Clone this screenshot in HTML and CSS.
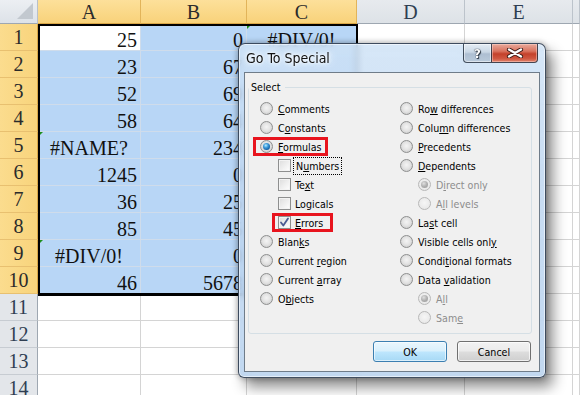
FILE: index.html
```html
<!DOCTYPE html>
<html>
<head>
<meta charset="utf-8">
<link rel="stylesheet" href="styles.css">
</head>
<body>
<div class="app">
  <div class="sheet">
    <div class="corner"><i class="corner-tri"></i></div>
    <div class="ch sel">A</div>
    <div class="ch sel">B</div>
    <div class="ch sel">C</div>
    <div class="ch">D</div>
    <div class="ch">E</div>
    <div class="ch"></div>

    <div class="rh sel">1</div>
    <div class="c act num">25</div>
    <div class="c s num">0</div>
    <div class="c s err"><i class="tri"></i>#DIV/0!</div>
    <div class="c"></div><div class="c"></div><div class="c"></div>

    <div class="rh sel">2</div>
    <div class="c s num">23</div>
    <div class="c s num">67</div>
    <div class="c s"></div>
    <div class="c"></div><div class="c"></div><div class="c"></div>

    <div class="rh sel">3</div>
    <div class="c s num">52</div>
    <div class="c s num">69</div>
    <div class="c s"></div>
    <div class="c"></div><div class="c"></div><div class="c"></div>

    <div class="rh sel">4</div>
    <div class="c s num">58</div>
    <div class="c s num">64</div>
    <div class="c s"></div>
    <div class="c"></div><div class="c"></div><div class="c"></div>

    <div class="rh sel">5</div>
    <div class="c s err"><i class="tri"></i>#NAME?</div>
    <div class="c s num">234</div>
    <div class="c s"></div>
    <div class="c"></div><div class="c"></div><div class="c"></div>

    <div class="rh sel">6</div>
    <div class="c s num">1245</div>
    <div class="c s num">0</div>
    <div class="c s"></div>
    <div class="c"></div><div class="c"></div><div class="c"></div>

    <div class="rh sel">7</div>
    <div class="c s num">36</div>
    <div class="c s num">25</div>
    <div class="c s"></div>
    <div class="c"></div><div class="c"></div><div class="c"></div>

    <div class="rh sel">8</div>
    <div class="c s num">85</div>
    <div class="c s num">45</div>
    <div class="c s"></div>
    <div class="c"></div><div class="c"></div><div class="c"></div>

    <div class="rh sel">9</div>
    <div class="c s err"><i class="tri"></i>#DIV/0!</div>
    <div class="c s num">0</div>
    <div class="c s"></div>
    <div class="c"></div><div class="c"></div><div class="c"></div>

    <div class="rh sel">10</div>
    <div class="c s num">46</div>
    <div class="c s num">5678</div>
    <div class="c s"></div>
    <div class="c"></div><div class="c"></div><div class="c"></div>

    <div class="rh">11</div>
    <div class="c"></div><div class="c"></div><div class="c"></div><div class="c"></div><div class="c"></div><div class="c"></div>
    <div class="rh">12</div>
    <div class="c"></div><div class="c"></div><div class="c"></div><div class="c"></div><div class="c"></div><div class="c"></div>
    <div class="rh">13</div>
    <div class="c"></div><div class="c"></div><div class="c"></div><div class="c"></div><div class="c"></div><div class="c"></div>
    <div class="rh">14</div>
    <div class="c"></div><div class="c"></div><div class="c"></div><div class="c"></div><div class="c"></div><div class="c"></div>
  </div>

  <div class="selbox"></div>

  <div class="dlg">
    <div class="tbar">
      <span class="ttl">Go To Special</span>
      <div class="tbtns">
        <span class="tb help">?</span>
        <span class="tb close">
          <svg width="18" height="10" viewBox="0 0 18 10">
            <path d="M3 1.5 L15 8.5 M15 1.5 L3 8.5" stroke="#3a1a16" stroke-width="4.2" stroke-linecap="round"/>
            <path d="M3 1.5 L15 8.5 M15 1.5 L3 8.5" stroke="#ffffff" stroke-width="2.4" stroke-linecap="round"/>
          </svg>
        </span>
      </div>
    </div>
    <div class="client">
      <fieldset class="grp">
        <legend>Select</legend>
        <div class="cols">
          <div class="col col-left">
            <div class="opt"><span class="rad"></span><span><u>C</u>omments</span></div>
            <div class="opt"><span class="rad"></span><span>C<u>o</u>nstants</span></div>
            <div class="opt"><span class="redbox redbox-formulas"></span><span class="rad on"></span><span><u>F</u>ormulas</span></div>
            <div class="opt sub"><span class="chk"></span><span class="focus">N<u>u</u>mbers</span></div>
            <div class="opt sub"><span class="chk"></span><span>Te<u>x</u>t</span></div>
            <div class="opt sub"><span class="chk"></span><span>Lo<u>g</u>icals</span></div>
            <div class="opt sub"><span class="redbox redbox-errors"></span><span class="chk"><svg width="11" height="11" viewBox="0 0 11 11"><path d="M2 5.5 L4.3 8.5 L9 1.5" fill="none" stroke="#4a5a92" stroke-width="1.8" stroke-linecap="round" stroke-linejoin="round"/></svg></span><span><u>E</u>rrors</span></div>
            <div class="opt"><span class="rad"></span><span>Blan<u>k</u>s</span></div>
            <div class="opt"><span class="rad"></span><span>Current <u>r</u>egion</span></div>
            <div class="opt"><span class="rad"></span><span>Current <u>a</u>rray</span></div>
            <div class="opt"><span class="rad"></span><span>O<u>b</u>jects</span></div>
          </div>
          <div class="col col-right">
            <div class="opt"><span class="rad"></span><span>Ro<u>w</u> differences</span></div>
            <div class="opt"><span class="rad"></span><span>Colu<u>m</u>n differences</span></div>
            <div class="opt"><span class="rad"></span><span><u>P</u>recedents</span></div>
            <div class="opt"><span class="rad"></span><span><u>D</u>ependents</span></div>
            <div class="opt sub dis"><span class="rad on"></span><span>D<u>i</u>rect only</span></div>
            <div class="opt sub dis"><span class="rad"></span><span>A<u>l</u>l levels</span></div>
            <div class="opt"><span class="rad"></span><span>La<u>s</u>t cell</span></div>
            <div class="opt"><span class="rad"></span><span>Visible cells onl<u>y</u></span></div>
            <div class="opt"><span class="rad"></span><span>Condi<u>t</u>ional formats</span></div>
            <div class="opt"><span class="rad"></span><span>Data <u>v</u>alidation</span></div>
            <div class="opt sub dis"><span class="rad on"></span><span>A<u>l</u>l</span></div>
            <div class="opt sub dis"><span class="rad"></span><span>Sam<u>e</u></span></div>
          </div>
        </div>
      </fieldset>
      <div class="btns">
        <span class="btn ok">OK</span>
        <span class="btn">Cancel</span>
      </div>
    </div>
  </div>
</div>
</body>
</html>
```

FILE: styles.css
```css
html, body {
  margin: 0;
  padding: 0;
  background: #ffffff;
}

.app {
  position: relative;
  width: 580px;
  height: 395px;
  overflow: hidden;
  background: #ffffff;
}

/* ---------- sheet ---------- */
.sheet {
  display: grid;
  grid-template-columns: 38px 103px 106px 110px 108px 108px 7px;
  grid-template-rows: 24px repeat(14, 27px);
  font-family: "Liberation Serif", "Times New Roman", serif;
  font-size: 20px;
  color: #111;
}

.sheet > div {
  box-sizing: border-box;
}

.corner {
  position: relative;
  background: linear-gradient(#eceff3, #dde2e8);
  border-right: 1px solid #b9c0c8;
  border-bottom: 1px solid #9ea7b1;
}

.corner-tri {
  position: absolute;
  right: 4px;
  bottom: 4px;
  width: 0;
  height: 0;
  border-left: 16px solid transparent;
  border-bottom: 16px solid #c2c8cf;
}

.ch {
  display: flex;
  align-items: center;
  justify-content: center;
  background: linear-gradient(#e7eaee, #dde2e7);
  border-right: 1px solid #bcc3cb;
  border-bottom: 1px solid #9ea7b1;
  color: #2f3e52;
  line-height: 24px;
}

.ch.sel {
  background: linear-gradient(#fde09a, #f8d27a);
  border-right: 1px solid #e2b45a;
  border-bottom: 1px solid #d9a646;
  color: #2b2b2b;
}

.rh {
  display: flex;
  align-items: center;
  justify-content: center;
  background: #e3e6ea;
  border-right: 1px solid #9ea7b1;
  border-bottom: 1px solid #c7ccd2;
  color: #2f3e52;
  line-height: 27px;
}

.rh.sel {
  background: linear-gradient(90deg, #fbdc8e, #f8d47c);
  border-right: 1px solid #d9a646;
  border-bottom: 1px solid #e8c070;
  color: #2b2b2b;
}

.c {
  position: relative;
  display: flex;
  align-items: flex-end;
  padding: 0 3px 0 3px;
  line-height: 20px;
  border-right: 1px solid #d4d4d4;
  border-bottom: 1px solid #d4d4d4;
  white-space: nowrap;
  overflow: hidden;
}

.c.s {
  background: #b8d6f6;
  border-right-color: #cfdceb;
  border-bottom-color: #cfdceb;
}

.c.act {
  background: #ffffff;
  border-right-color: #cfdceb;
  border-bottom-color: #cfdceb;
}

.c.num {
  justify-content: flex-end;
}

.c.err {
  justify-content: center;
}

.tri {
  position: absolute;
  left: 0;
  top: 0;
  width: 0;
  height: 0;
  border-top: 5px solid #1e8f1e;
  border-right: 5px solid transparent;
}

.selbox {
  position: absolute;
  left: 38px;
  top: 24px;
  width: 320px;
  height: 272px;
  box-sizing: border-box;
  border: 2px solid #000;
  border-bottom-width: 3px;
}

/* ---------- dialog ---------- */
.dlg {
  position: absolute;
  left: 238px;
  top: 43px;
  width: 308px;
  height: 335px;
  box-sizing: border-box;
  display: flex;
  flex-direction: column;
  border: 1px solid rgba(28, 40, 58, 0.8);
  border-radius: 7px 7px 6px 6px;
  background: linear-gradient(180deg, rgba(206, 226, 246, 0.82) 0%, rgba(190, 214, 240, 0.84) 40%, rgba(184, 210, 238, 0.86) 100%);
  -webkit-backdrop-filter: blur(3px);
  backdrop-filter: blur(3px);
  box-shadow: 0 0 6px rgba(0, 0, 0, 0.35), 7px 9px 14px rgba(0, 0, 0, 0.45), inset 0 0 0 1px rgba(255, 255, 255, 0.55);
  font-family: "DejaVu Sans Condensed", "DejaVu Sans", sans-serif;
  font-stretch: condensed;
  font-size: 10.6px;
  color: #000;
}

.tbar {
  height: 28px;
  display: flex;
  justify-content: space-between;
  align-items: flex-start;
  padding-left: 7px;
  padding-right: 7px;
}

.ttl {
  margin-top: 6px;
  font-size: 14px;
  line-height: 16px;
  color: #111;
  text-shadow: 0 0 6px #fff, 0 0 3px #fff, 0 0 10px rgba(255, 255, 255, 0.9);
}

.tbtns {
  display: flex;
}

.tb {
  height: 19px;
  box-sizing: border-box;
  display: flex;
  align-items: center;
  justify-content: center;
  border: 1px solid rgba(40, 52, 68, 0.85);
  border-top: none;
}

.help {
  width: 28px;
  border-radius: 0 0 0 4px;
  border-right: none;
  background: linear-gradient(180deg, #e4ecf4 0%, #c9d7e5 45%, #aebfd2 55%, #b9cadb 100%);
  box-shadow: inset 0 0 0 1px rgba(255, 255, 255, 0.5);
  color: #fff;
  font-family: "DejaVu Sans", sans-serif;
  font-weight: bold;
  font-size: 13px;
  text-shadow: 0 0 1px #2a3440, 0 0 1px #2a3440, 1px 1px 1px #2a3440;
}

.close {
  width: 47px;
  border-radius: 0 0 4px 0;
  background: linear-gradient(180deg, #e9aa9c 0%, #d9735f 40%, #c4412b 55%, #cf5640 80%, #e2836c 100%);
  box-shadow: inset 0 0 0 1px rgba(255, 220, 210, 0.45);
}

.client {
  flex: 1;
  margin: 0 5px 5px 5px;
  background: #f0f0f0;
  border: 1px solid #6f7c89;
  display: flex;
  flex-direction: column;
}

.grp {
  margin: 7px 7px 0 3px;
  padding: 0 0 6px 0;
  border: 1px solid #d5dfe5;
  border-radius: 3px;
  min-width: 0;
}

.grp legend {
  padding: 0 5px 0 2px;
  margin-left: 0;
  line-height: 14px;
}

.cols {
  display: flex;
  padding: 5px 0 0 11px;
}

.col {
  display: flex;
  flex-direction: column;
}

.col-left {
  width: 140px;
}

.opt {
  position: relative;
  height: 19px;
  display: flex;
  align-items: center;
  gap: 5px;
  white-space: nowrap;
  line-height: 14px;
}

.opt.sub {
  padding-left: 18px;
  gap: 4px;
}

.opt.dis {
  color: #8d8d8d;
  gap: 5px;
}

.rad {
  position: relative;
  flex: none;
  width: 13px;
  height: 13px;
  box-sizing: border-box;
  border-radius: 50%;
  border: 1px solid #8e8f8f;
  background: radial-gradient(circle at 50% 45%, #f4f4f4 0%, #e4e4e4 45%, #cfcfcf 80%, #f6f6f6 100%);
}

.rad.on::after {
  content: "";
  position: absolute;
  left: 2px;
  top: 2px;
  width: 7px;
  height: 7px;
  border-radius: 50%;
  background: radial-gradient(circle at 40% 35%, #b8ecff 0%, #3f9ddc 35%, #0e5aa0 75%, #1b4f86 100%);
}

.dis .rad {
  border-color: #b8b8b8;
  background: radial-gradient(circle at 50% 45%, #f6f6f6 0%, #ebebeb 60%, #e2e2e2 100%);
}

.dis .rad.on::after {
  background: radial-gradient(circle at 40% 35%, #e0e0e0 0%, #b0b0b0 50%, #979797 100%);
}

.chk {
  flex: none;
  width: 13px;
  height: 13px;
  box-sizing: border-box;
  border: 1px solid #8e8f8f;
  background: linear-gradient(135deg, #dcdcdc 0%, #eeeeee 50%, #ffffff 100%);
  box-shadow: inset 0 0 0 1px #f3f3f3;
  display: flex;
  align-items: center;
  justify-content: center;
}

.focus {
  outline: 1px dotted #000;
  outline-offset: 1px;
  padding: 0 1px;
}

.redbox {
  position: absolute;
  top: 0;
  box-sizing: border-box;
  border: 3px solid #e8141e;
}

.redbox-formulas {
  left: -7px;
  width: 75px;
  height: 19px;
}

.redbox-errors {
  left: 12px;
  width: 61px;
  height: 19px;
}

.btns {
  display: flex;
  justify-content: flex-end;
  gap: 10px;
  padding-right: 8px;
  margin-top: 7px;
}

.btn {
  width: 74px;
  height: 21px;
  box-sizing: border-box;
  display: flex;
  align-items: center;
  justify-content: center;
  border: 1px solid #707070;
  border-radius: 3px;
  background: linear-gradient(180deg, #f2f2f2 0%, #ebebeb 48%, #dddddd 52%, #cfcfcf 100%);
  box-shadow: inset 0 0 0 1px rgba(255, 255, 255, 0.7);
}

.btn.ok {
  border-color: #3c7fb1;
  background: linear-gradient(180deg, #eaf6fd 0%, #d9f0fc 48%, #bee6fd 52%, #a7d9f5 100%);
  box-shadow: inset 0 0 0 1px rgba(255, 255, 255, 0.6);
}
```
